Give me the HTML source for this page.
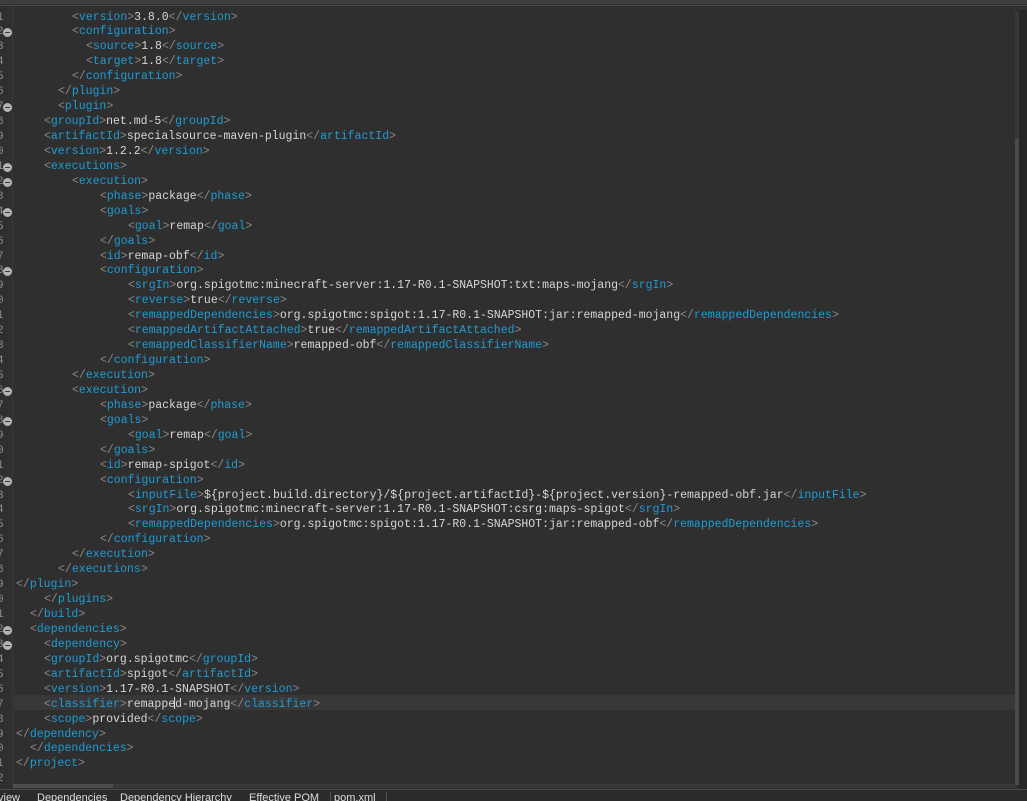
<!DOCTYPE html>
<html><head><meta charset="utf-8"><style>
html,body{margin:0;padding:0;width:1027px;height:800px;overflow:hidden;background:#2f2f2f;}
#top{position:absolute;left:0;top:0;width:1027px;height:4px;background:#3e3e3e;}
#top2{position:absolute;left:0;top:5px;width:1027px;height:1px;background:#4a4a4a;}
#gut{position:absolute;left:12px;top:6px;width:1px;height:780px;background:#3a3a3a;}
#hl{position:absolute;left:14px;top:695px;width:1001px;height:15px;background:#383838;}
#code{position:absolute;left:0;top:10.5px;font-family:"Liberation Mono",monospace;font-size:11.5px;line-height:14.95px;color:#d6d6d6;}
.l{height:14.95px;position:relative;}
.n{position:absolute;left:-3px;color:#8a909a;font-size:11px;}
.t{position:absolute;white-space:pre;}
.b{color:#8a8a8a}.g{color:#1e9cd6}
.f{position:absolute;left:3px;top:3px;width:9px;height:9px;border-radius:50%;background:#b4b4b4;}
.f:after{content:"";position:absolute;left:2px;top:4px;width:5px;height:1px;background:#3a3a3a;}
#vs{position:absolute;left:1015px;top:12px;width:4px;height:773px;background:#383838;}
#vt{position:absolute;left:1015px;top:139px;width:4px;height:646px;background:#4a4a4a;}
#rs{position:absolute;left:1019px;top:10px;width:8px;height:780px;background:#262626;}
#hs{position:absolute;left:13px;top:784px;width:1002px;height:4px;background:#383838;}
#ht{position:absolute;left:13px;top:784px;width:100px;height:4px;background:#4e4e4e;}
#tabs{position:absolute;left:0;top:789px;width:1027px;height:11px;background:#2b2b2b;border-top:1px solid #4a4a4a;font-family:"Liberation Sans",sans-serif;font-size:11px;color:#ddd;overflow:hidden;}
#tabs span{position:absolute;top:2px;white-space:pre;}
#cur{position:absolute;left:174px;top:697px;width:1px;height:12px;background:#ddd;}
</style></head><body>
<div id="top"></div><div id="top2"></div><div id="gut"></div><div id="hl"></div>
<div id="rs"></div><div id="vs"></div><div id="vt"></div><div id="hs"></div><div id="ht"></div>
<div id="code">
<div class="l"><span class="n">1</span><span class="t" style="left:72px"><span class="b">&lt;</span><span class="g">version</span><span class="b">&gt;</span>3.8.0<span class="b">&lt;/</span><span class="g">version</span><span class="b">&gt;</span></span></div>
<div class="l"><span class="n">2</span><span class="f"></span><span class="t" style="left:72px"><span class="b">&lt;</span><span class="g">configuration</span><span class="b">&gt;</span></span></div>
<div class="l"><span class="n">3</span><span class="t" style="left:86px"><span class="b">&lt;</span><span class="g">source</span><span class="b">&gt;</span>1.8<span class="b">&lt;/</span><span class="g">source</span><span class="b">&gt;</span></span></div>
<div class="l"><span class="n">4</span><span class="t" style="left:86px"><span class="b">&lt;</span><span class="g">target</span><span class="b">&gt;</span>1.8<span class="b">&lt;/</span><span class="g">target</span><span class="b">&gt;</span></span></div>
<div class="l"><span class="n">5</span><span class="t" style="left:72px"><span class="b">&lt;/</span><span class="g">configuration</span><span class="b">&gt;</span></span></div>
<div class="l"><span class="n">6</span><span class="t" style="left:58px"><span class="b">&lt;/</span><span class="g">plugin</span><span class="b">&gt;</span></span></div>
<div class="l"><span class="n">7</span><span class="f"></span><span class="t" style="left:58px"><span class="b">&lt;</span><span class="g">plugin</span><span class="b">&gt;</span></span></div>
<div class="l"><span class="n">8</span><span class="t" style="left:44px"><span class="b">&lt;</span><span class="g">groupId</span><span class="b">&gt;</span>net.md-5<span class="b">&lt;/</span><span class="g">groupId</span><span class="b">&gt;</span></span></div>
<div class="l"><span class="n">9</span><span class="t" style="left:44px"><span class="b">&lt;</span><span class="g">artifactId</span><span class="b">&gt;</span>specialsource-maven-plugin<span class="b">&lt;/</span><span class="g">artifactId</span><span class="b">&gt;</span></span></div>
<div class="l"><span class="n">0</span><span class="t" style="left:44px"><span class="b">&lt;</span><span class="g">version</span><span class="b">&gt;</span>1.2.2<span class="b">&lt;/</span><span class="g">version</span><span class="b">&gt;</span></span></div>
<div class="l"><span class="n">1</span><span class="f"></span><span class="t" style="left:44px"><span class="b">&lt;</span><span class="g">executions</span><span class="b">&gt;</span></span></div>
<div class="l"><span class="n">2</span><span class="f"></span><span class="t" style="left:72px"><span class="b">&lt;</span><span class="g">execution</span><span class="b">&gt;</span></span></div>
<div class="l"><span class="n">3</span><span class="t" style="left:100px"><span class="b">&lt;</span><span class="g">phase</span><span class="b">&gt;</span>package<span class="b">&lt;/</span><span class="g">phase</span><span class="b">&gt;</span></span></div>
<div class="l"><span class="n">4</span><span class="f"></span><span class="t" style="left:100px"><span class="b">&lt;</span><span class="g">goals</span><span class="b">&gt;</span></span></div>
<div class="l"><span class="n">5</span><span class="t" style="left:128px"><span class="b">&lt;</span><span class="g">goal</span><span class="b">&gt;</span>remap<span class="b">&lt;/</span><span class="g">goal</span><span class="b">&gt;</span></span></div>
<div class="l"><span class="n">6</span><span class="t" style="left:100px"><span class="b">&lt;/</span><span class="g">goals</span><span class="b">&gt;</span></span></div>
<div class="l"><span class="n">7</span><span class="t" style="left:100px"><span class="b">&lt;</span><span class="g">id</span><span class="b">&gt;</span>remap-obf<span class="b">&lt;/</span><span class="g">id</span><span class="b">&gt;</span></span></div>
<div class="l"><span class="n">8</span><span class="f"></span><span class="t" style="left:100px"><span class="b">&lt;</span><span class="g">configuration</span><span class="b">&gt;</span></span></div>
<div class="l"><span class="n">9</span><span class="t" style="left:128px"><span class="b">&lt;</span><span class="g">srgIn</span><span class="b">&gt;</span>org.spigotmc:minecraft-server:1.17-R0.1-SNAPSHOT:txt:maps-mojang<span class="b">&lt;/</span><span class="g">srgIn</span><span class="b">&gt;</span></span></div>
<div class="l"><span class="n">0</span><span class="t" style="left:128px"><span class="b">&lt;</span><span class="g">reverse</span><span class="b">&gt;</span>true<span class="b">&lt;/</span><span class="g">reverse</span><span class="b">&gt;</span></span></div>
<div class="l"><span class="n">1</span><span class="t" style="left:128px"><span class="b">&lt;</span><span class="g">remappedDependencies</span><span class="b">&gt;</span>org.spigotmc:spigot:1.17-R0.1-SNAPSHOT:jar:remapped-mojang<span class="b">&lt;/</span><span class="g">remappedDependencies</span><span class="b">&gt;</span></span></div>
<div class="l"><span class="n">2</span><span class="t" style="left:128px"><span class="b">&lt;</span><span class="g">remappedArtifactAttached</span><span class="b">&gt;</span>true<span class="b">&lt;/</span><span class="g">remappedArtifactAttached</span><span class="b">&gt;</span></span></div>
<div class="l"><span class="n">3</span><span class="t" style="left:128px"><span class="b">&lt;</span><span class="g">remappedClassifierName</span><span class="b">&gt;</span>remapped-obf<span class="b">&lt;/</span><span class="g">remappedClassifierName</span><span class="b">&gt;</span></span></div>
<div class="l"><span class="n">4</span><span class="t" style="left:100px"><span class="b">&lt;/</span><span class="g">configuration</span><span class="b">&gt;</span></span></div>
<div class="l"><span class="n">5</span><span class="t" style="left:72px"><span class="b">&lt;/</span><span class="g">execution</span><span class="b">&gt;</span></span></div>
<div class="l"><span class="n">6</span><span class="f"></span><span class="t" style="left:72px"><span class="b">&lt;</span><span class="g">execution</span><span class="b">&gt;</span></span></div>
<div class="l"><span class="n">7</span><span class="t" style="left:100px"><span class="b">&lt;</span><span class="g">phase</span><span class="b">&gt;</span>package<span class="b">&lt;/</span><span class="g">phase</span><span class="b">&gt;</span></span></div>
<div class="l"><span class="n">8</span><span class="f"></span><span class="t" style="left:100px"><span class="b">&lt;</span><span class="g">goals</span><span class="b">&gt;</span></span></div>
<div class="l"><span class="n">9</span><span class="t" style="left:128px"><span class="b">&lt;</span><span class="g">goal</span><span class="b">&gt;</span>remap<span class="b">&lt;/</span><span class="g">goal</span><span class="b">&gt;</span></span></div>
<div class="l"><span class="n">0</span><span class="t" style="left:100px"><span class="b">&lt;/</span><span class="g">goals</span><span class="b">&gt;</span></span></div>
<div class="l"><span class="n">1</span><span class="t" style="left:100px"><span class="b">&lt;</span><span class="g">id</span><span class="b">&gt;</span>remap-spigot<span class="b">&lt;/</span><span class="g">id</span><span class="b">&gt;</span></span></div>
<div class="l"><span class="n">2</span><span class="f"></span><span class="t" style="left:100px"><span class="b">&lt;</span><span class="g">configuration</span><span class="b">&gt;</span></span></div>
<div class="l"><span class="n">3</span><span class="t" style="left:128px"><span class="b">&lt;</span><span class="g">inputFile</span><span class="b">&gt;</span>${project.build.directory}/${project.artifactId}-${project.version}-remapped-obf.jar<span class="b">&lt;/</span><span class="g">inputFile</span><span class="b">&gt;</span></span></div>
<div class="l"><span class="n">4</span><span class="t" style="left:128px"><span class="b">&lt;</span><span class="g">srgIn</span><span class="b">&gt;</span>org.spigotmc:minecraft-server:1.17-R0.1-SNAPSHOT:csrg:maps-spigot<span class="b">&lt;/</span><span class="g">srgIn</span><span class="b">&gt;</span></span></div>
<div class="l"><span class="n">5</span><span class="t" style="left:128px"><span class="b">&lt;</span><span class="g">remappedDependencies</span><span class="b">&gt;</span>org.spigotmc:spigot:1.17-R0.1-SNAPSHOT:jar:remapped-obf<span class="b">&lt;/</span><span class="g">remappedDependencies</span><span class="b">&gt;</span></span></div>
<div class="l"><span class="n">6</span><span class="t" style="left:100px"><span class="b">&lt;/</span><span class="g">configuration</span><span class="b">&gt;</span></span></div>
<div class="l"><span class="n">7</span><span class="t" style="left:72px"><span class="b">&lt;/</span><span class="g">execution</span><span class="b">&gt;</span></span></div>
<div class="l"><span class="n">8</span><span class="t" style="left:58px"><span class="b">&lt;/</span><span class="g">executions</span><span class="b">&gt;</span></span></div>
<div class="l"><span class="n">9</span><span class="t" style="left:16px"><span class="b">&lt;/</span><span class="g">plugin</span><span class="b">&gt;</span></span></div>
<div class="l"><span class="n">0</span><span class="t" style="left:44px"><span class="b">&lt;/</span><span class="g">plugins</span><span class="b">&gt;</span></span></div>
<div class="l"><span class="n">1</span><span class="t" style="left:30px"><span class="b">&lt;/</span><span class="g">build</span><span class="b">&gt;</span></span></div>
<div class="l"><span class="n">2</span><span class="f"></span><span class="t" style="left:30px"><span class="b">&lt;</span><span class="g">dependencies</span><span class="b">&gt;</span></span></div>
<div class="l"><span class="n">3</span><span class="f"></span><span class="t" style="left:44px"><span class="b">&lt;</span><span class="g">dependency</span><span class="b">&gt;</span></span></div>
<div class="l"><span class="n">4</span><span class="t" style="left:44px"><span class="b">&lt;</span><span class="g">groupId</span><span class="b">&gt;</span>org.spigotmc<span class="b">&lt;/</span><span class="g">groupId</span><span class="b">&gt;</span></span></div>
<div class="l"><span class="n">5</span><span class="t" style="left:44px"><span class="b">&lt;</span><span class="g">artifactId</span><span class="b">&gt;</span>spigot<span class="b">&lt;/</span><span class="g">artifactId</span><span class="b">&gt;</span></span></div>
<div class="l"><span class="n">6</span><span class="t" style="left:44px"><span class="b">&lt;</span><span class="g">version</span><span class="b">&gt;</span>1.17-R0.1-SNAPSHOT<span class="b">&lt;/</span><span class="g">version</span><span class="b">&gt;</span></span></div>
<div class="l"><span class="n">7</span><span class="t" style="left:44px"><span class="b">&lt;</span><span class="g">classifier</span><span class="b">&gt;</span>remapped-mojang<span class="b">&lt;/</span><span class="g">classifier</span><span class="b">&gt;</span></span></div>
<div class="l"><span class="n">8</span><span class="t" style="left:44px"><span class="b">&lt;</span><span class="g">scope</span><span class="b">&gt;</span>provided<span class="b">&lt;/</span><span class="g">scope</span><span class="b">&gt;</span></span></div>
<div class="l"><span class="n">9</span><span class="t" style="left:16px"><span class="b">&lt;/</span><span class="g">dependency</span><span class="b">&gt;</span></span></div>
<div class="l"><span class="n">0</span><span class="t" style="left:30px"><span class="b">&lt;/</span><span class="g">dependencies</span><span class="b">&gt;</span></span></div>
<div class="l"><span class="n">1</span><span class="t" style="left:16px"><span class="b">&lt;/</span><span class="g">project</span><span class="b">&gt;</span></span></div>
<div class="l"><span class="n">2</span></div>
</div>
<div id="cur"></div>
<div id="tabs"><span style="left:-2px">view</span><span style="left:37px">Dependencies</span><span style="left:120px">Dependency Hierarchy</span><span style="left:249px">Effective POM</span><span style="left:330px;border-left:1px solid #555;padding-left:3px">pom.xml</span><span style="left:386px;border-left:1px solid #555;width:2px">&nbsp;</span></div>
</body></html>
